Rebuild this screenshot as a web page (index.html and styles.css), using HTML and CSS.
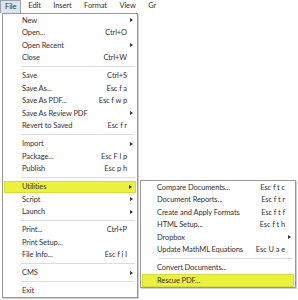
FILE: index.html
```html
<!DOCTYPE html>
<html>
<head>
<meta charset="utf-8">
<link rel="stylesheet" href="styles.css">
</head>
<body>
<div class="menubar">
  <span class="mb-item active">File</span>
  <span class="mb-item">Edit</span>
  <span class="mb-item">Insert</span>
  <span class="mb-item">Format</span>
  <span class="mb-item">View</span>
  <span class="mb-item">Gr</span>
</div>
<div class="stage">
  <div class="menu main">
    <div class="row"><span class="lbl">New</span><span class="sc"></span><span class="arr"></span></div>
    <div class="row"><span class="lbl">Open...</span><span class="sc">Ctrl+O</span><span></span></div>
    <div class="row"><span class="lbl">Open Recent</span><span class="sc"></span><span class="arr"></span></div>
    <div class="row"><span class="lbl">Close</span><span class="sc">Ctrl+W</span><span></span></div>
    <div class="sep"></div>
    <div class="row"><span class="lbl">Save</span><span class="sc">Ctrl+S</span><span></span></div>
    <div class="row"><span class="lbl">Save As...</span><span class="sc">Esc f a</span><span></span></div>
    <div class="row"><span class="lbl">Save As PDF...</span><span class="sc">Esc f w p</span><span></span></div>
    <div class="row"><span class="lbl">Save As Review PDF</span><span class="sc"></span><span class="arr"></span></div>
    <div class="row"><span class="lbl">Revert to Saved</span><span class="sc">Esc f r</span><span></span></div>
    <div class="sep"></div>
    <div class="row"><span class="lbl">Import</span><span class="sc"></span><span class="arr"></span></div>
    <div class="row"><span class="lbl">Package...</span><span class="sc">Esc F l p</span><span></span></div>
    <div class="row"><span class="lbl">Publish</span><span class="sc">Esc p h</span><span></span></div>
    <div class="sep"></div>
    <div class="row hl"><span class="lbl">Utilities</span><span class="sc"></span><span class="arr"></span></div>
    <div class="row"><span class="lbl">Script</span><span class="sc"></span><span class="arr"></span></div>
    <div class="row"><span class="lbl">Launch</span><span class="sc"></span><span class="arr"></span></div>
    <div class="sep"></div>
    <div class="row"><span class="lbl">Print...</span><span class="sc">Ctrl+P</span><span></span></div>
    <div class="row"><span class="lbl">Print Setup...</span><span class="sc"></span><span></span></div>
    <div class="row"><span class="lbl">File Info...</span><span class="sc">Esc f i I</span><span></span></div>
    <div class="sep"></div>
    <div class="row"><span class="lbl">CMS</span><span class="sc"></span><span class="arr"></span></div>
    <div class="sep"></div>
    <div class="row"><span class="lbl">Exit</span><span class="sc"></span><span></span></div>
  </div>
  <div class="menu sub">
    <div class="row"><span class="lbl">Compare Documents...</span><span class="sc">Esc f t c</span><span></span></div>
    <div class="row"><span class="lbl">Document Reports...</span><span class="sc">Esc f t r</span><span></span></div>
    <div class="row"><span class="lbl">Create and Apply Formats</span><span class="sc">Esc f t f</span><span></span></div>
    <div class="row"><span class="lbl">HTML Setup...</span><span class="sc">Esc f t h</span><span></span></div>
    <div class="row"><span class="lbl">Dropbox</span><span class="sc"></span><span class="arr"></span></div>
    <div class="row"><span class="lbl">Update MathML Equations</span><span class="sc">Esc U a e</span><span></span></div>
    <div class="sep"></div>
    <div class="row"><span class="lbl">Convert Documents...</span><span class="sc"></span><span></span></div>
    <div class="row hl"><span class="lbl">Rescue PDF...</span><span class="sc"></span><span></span></div>
  </div>
</div>
</body>
</html>
```

FILE: styles.css
```css
html, body {
  margin: 0;
  padding: 0;
  background: #ffffff;
}
body {
  font-family: Lato, "Liberation Sans", sans-serif;
  font-size: 7.5px;
  letter-spacing: -0.1px;
  color: #333333;
  width: 298px;
  height: 300px;
  overflow: hidden;
}
.menubar {
  display: flex;
  height: 13px;
  align-items: center;
  background: #ffffff;
}
.mb-item {
  height: 13px;
  line-height: 12px;
  padding: 0 6px;
  box-sizing: border-box;
  margin-right: 0.5px;
}
.mb-item.active {
  background: #dfe4ea;
  border: 1px solid #9aa3ad;
  border-bottom: none;
  padding: 0 4px;
  margin-right: 1px;
}
.stage {
  position: relative;
}
.menu {
  background: #ffffff;
  border: 1px solid #979797;
  padding: 0;
  box-sizing: border-box;
}
.main {
  margin-left: 2px;
  width: 136px;
  box-shadow: 1px 1px 0 #d0d0d0;
}
.sub {
  position: absolute;
  left: 140px;
  top: 167px;
  width: 156px;
  box-shadow: 1px 1px 0 #d0d0d0;
}
.row {
  display: grid;
  grid-template-columns: 1fr auto 9px;
  align-items: center;
  height: 12.5px;
  padding-left: 18px;
  margin: 0 1px;
  box-sizing: border-box;
  white-space: nowrap;
}
.sub .row {
  padding-left: 15px;
}
.sc {
  text-align: right;
}
.arr {
  justify-self: center;
  width: 0;
  height: 0;
  border-left: 3px solid #333;
  border-top: 2.5px solid transparent;
  border-bottom: 2.5px solid transparent;
}
.hl {
  background: #ebf23d;
  border: 1px solid #d6dc3a;
  padding-left: 17px;
}
.sub .hl {
  padding-left: 14px;
}
.sep {
  height: 1px;
  background: #dcdcdc;
  margin: 2px 2px 2.5px 18px;
}
```
